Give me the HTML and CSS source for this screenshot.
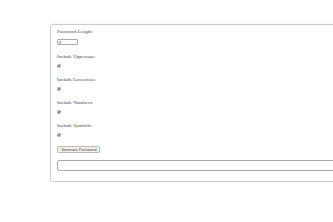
FILE: index.html
```html
<!DOCTYPE html>
<html lang="en">

<head>
    <meta charset="UTF-8">
    <meta name="viewport" content="width=device-width, initial-scale=1.0">
    <title>Password Generator</title>
    <link rel="stylesheet" href="styles.css">
</head>

<body>
    <div class="container">
        <div class="form-group">
            <label for="length">Password Length:</label>
            <input type="number" id="length" class="length-input" value="8">
        </div>
        <div class="form-group">
            <label for="uppercase">Include Uppercase:</label>
            <input type="checkbox" id="uppercase" checked>
        </div>
        <div class="form-group">
            <label for="lowercase">Include Lowercase:</label>
            <input type="checkbox" id="lowercase" checked>
        </div>
        <div class="form-group">
            <label for="numbers">Include Numbers:</label>
            <input type="checkbox" id="numbers" checked>
        </div>
        <div class="form-group">
            <label for="symbols">Include Symbols:</label>
            <input type="checkbox" id="symbols" checked>
        </div>
        <button class="generate-btn">Generate Password</button>
        <input type="text" class="output" readonly>
    </div>
</body>

</html>
```

FILE: styles.css
```css
body {
    margin: 0;
    padding: 24px 0 0 50px;
    font-family: 'Liberation Serif', 'Times New Roman', serif;
    background-color: white;
    overflow: hidden;
}

.container {
    width: 300px;
    padding: 4px 6px 10px 6px;
    border: 1px solid #ccc;
    border-radius: 3px;
    box-shadow: 0 0 2px rgba(0, 0, 0, 0.08);
}

.form-group {
    display: flex;
    flex-direction: column;
    align-items: flex-start;
    gap: 4px;
    margin-bottom: 9px;
}

label {
    font-size: 5px;
    line-height: 6px;
    color: #444;
}

.length-input {
    width: 21px;
    height: 6px;
    box-sizing: border-box;
    margin: 0;
    padding: 0 1px;
    font-size: 4px;
    color: #444;
    border: 1px solid #aaa;
    border-radius: 1px;
}

input[type="checkbox"] {
    width: 4px;
    height: 4px;
    margin: 0;
    accent-color: #c4c4c4;
}

.generate-btn {
    display: block;
    margin: 6px 0 7px 0;
    height: 7px;
    padding: 0 3px;
    font-family: 'Liberation Sans', Arial, sans-serif;
    font-size: 4px;
    line-height: 5px;
    color: #444;
    background-color: #f0f0f0;
    border: 1px solid #bbb;
    border-radius: 1px;
}

.output {
    display: block;
    width: 100%;
    height: 11px;
    box-sizing: border-box;
    margin: 0;
    border: 1px solid #aaa;
    border-radius: 2px;
}
```
